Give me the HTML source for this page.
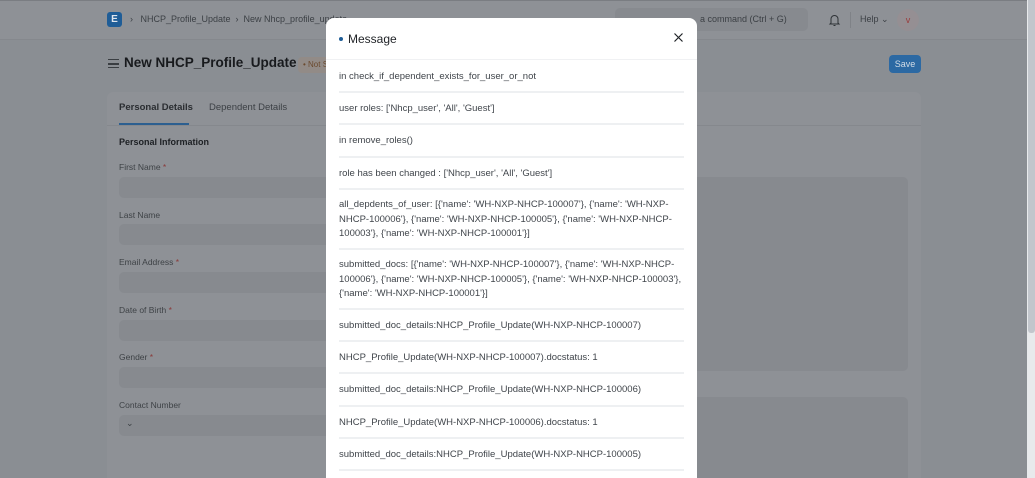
<!DOCTYPE html>
<html style="overflow:hidden;width:1035px;height:478px"><head><meta charset="utf-8"><style>
*{box-sizing:border-box;margin:0;padding:0}
body{width:1035px;height:478px;overflow:hidden;background:#8a8e93;font-family:"Liberation Sans",sans-serif;position:relative}
.a{position:absolute}
.nav{left:0;top:0;width:1027px;height:40px;background:#8e9196;border-top:1px solid #7a7d82;border-bottom:1px solid #85888d}
.lbl{font-size:8.5px;color:#3e4246}
.lbl b{color:#8a3a3a;font-weight:normal}
.inp{background:#878a8f;border-radius:5px;height:21px}
.modal{left:326px;top:18px;width:371px;height:460px;background:#fff;border-radius:8px 8px 0 0}
.row{left:339px;width:345px;border-bottom:2px solid #eef0f2;font-size:9.5px;color:#40454b;line-height:14.5px;white-space:nowrap}
</style></head><body>
<div class="a nav"></div>
<div class="a" style="left:107px;top:12px;width:15px;height:15px;background:#1f5d97;border-radius:3px;color:#dfe6ee;font-size:10px;font-weight:bold;text-align:center;line-height:15px">E</div>
<div class="a" style="left:130px;top:14px;font-size:9px;color:#3c4045;white-space:nowrap">›&nbsp;&nbsp; NHCP_Profile_Update &nbsp;›&nbsp; New Nhcp_profile_update</div>
<div class="a" style="left:615px;top:8px;width:193px;height:23px;background:#878a8f;border-radius:5px"></div>
<div class="a" style="left:700px;top:14px;font-size:9px;color:#3c4045">a command (Ctrl + G)</div>
<svg class="a" style="left:828px;top:13px" width="13" height="14" viewBox="0 0 13 14"><path d="M3 10V6a3.5 3.5 0 0 1 7 0v4l1 1H2z M5.5 12.5h2" fill="none" stroke="#2f3337" stroke-width="1"/></svg>
<div class="a" style="left:850px;top:12px;width:1px;height:16px;background:#7f8287"></div>
<div class="a" style="left:860px;top:14px;font-size:9px;color:#3c4045">Help ⌄</div>
<div class="a" style="left:897px;top:9px;width:22px;height:22px;border-radius:50%;background:#958f93;color:#9a3b3b;font-size:9px;text-align:center;line-height:22px">v</div>

<div class="a" style="left:108px;top:59px;width:11px;height:9px;border-top:1.5px solid #3a3e42;border-bottom:1.5px solid #3a3e42"></div>
<div class="a" style="left:108px;top:63px;width:11px;height:1.5px;background:#3a3e42"></div>
<div class="a" style="left:124px;top:55px;font-size:13.5px;font-weight:bold;color:#181a1d;white-space:nowrap">New NHCP_Profile_Update</div>
<div class="a" style="left:298px;top:57px;width:40px;height:16px;background:#928b87;border-radius:4px;font-size:8px;color:#6b4a2e;line-height:16px;padding-left:5px">• Not S</div>
<div class="a" style="left:889px;top:55px;width:32px;height:18px;background:#2c69a3;border-radius:4px;color:#d2dce6;font-size:9px;text-align:center;line-height:18px">Save</div>

<div class="a" style="left:107px;top:92px;width:814px;height:400px;background:#8e9196;border-radius:6px"></div>
<div class="a" style="left:107px;top:125px;width:814px;height:1px;background:#85888d"></div>
<div class="a" style="left:119px;top:102px;font-size:9.5px;font-weight:bold;color:#2a2d31">Personal Details</div>
<div class="a" style="left:209px;top:102px;font-size:9.5px;color:#3c4045">Dependent Details</div>
<div class="a" style="left:119px;top:123px;width:70px;height:2px;background:#2c5f90"></div>
<div class="a" style="left:119px;top:137px;font-size:9px;font-weight:bold;color:#1d2024">Personal Information</div>
<div class="a lbl" style="left:119px;top:162px">First Name <b>*</b></div>
<div class="a inp" style="left:119px;top:177px;width:230px"></div>
<div class="a lbl" style="left:119px;top:210px">Last Name</div>
<div class="a inp" style="left:119px;top:224px;width:230px"></div>
<div class="a lbl" style="left:119px;top:257px">Email Address <b>*</b></div>
<div class="a inp" style="left:119px;top:272px;width:230px"></div>
<div class="a lbl" style="left:119px;top:305px">Date of Birth <b>*</b></div>
<div class="a inp" style="left:119px;top:320px;width:230px"></div>
<div class="a lbl" style="left:119px;top:352px">Gender <b>*</b></div>
<div class="a inp" style="left:119px;top:367px;width:230px"></div>
<div class="a lbl" style="left:119px;top:400px">Contact Number</div>
<div class="a inp" style="left:119px;top:415px;width:230px;font-size:9px;color:#3c4045;padding:3px 0 0 7px">⌄</div>
<div class="a" style="left:660px;top:177px;width:248px;height:194px;background:#878a8f;border-radius:5px"></div>
<div class="a" style="left:660px;top:397px;width:248px;height:90px;background:#878a8f;border-radius:5px"></div>

<div class="a" style="left:1027px;top:0;width:8px;height:478px;background:#e8eaec"></div>
<div class="a" style="left:1028px;top:0;width:7px;height:333px;background:#c2c6cc;border-radius:0 0 3px 3px"></div>

<div class="a modal"></div>
<div class="a" style="left:326px;top:59px;width:371px;height:1px;background:#f0f1f3"></div>
<div class="a" style="left:339px;top:37px;width:4px;height:4px;border-radius:50%;background:#1f5d97"></div>
<div class="a" style="left:348px;top:32px;font-size:12px;color:#1f2226">Message</div>
<svg class="a" style="left:673px;top:32px" width="11" height="11" viewBox="0 0 11 11"><path d="M1.5 1.5l8 8M9.5 1.5l-8 8" stroke="#1f2226" stroke-width="1.2"/></svg>

<div class="a row" style="top:60px;height:33px;padding-top:10px">in check_if_dependent_exists_for_user_or_not</div>
<div class="a row" style="top:93px;height:32px;padding-top:9px">user roles: ['Nhcp_user', 'All', 'Guest']</div>
<div class="a row" style="top:125px;height:33px;padding-top:9px">in remove_roles()</div>
<div class="a row" style="top:158px;height:32px;padding-top:9px">role has been changed : ['Nhcp_user', 'All', 'Guest']</div>
<div class="a row" style="top:190px;height:60px;padding-top:8px">all_depdents_of_user: [{'name': 'WH-NXP-NHCP-100007'}, {'name': 'WH-NXP-<br>NHCP-100006'}, {'name': 'WH-NXP-NHCP-100005'}, {'name': 'WH-NXP-NHCP-<br>100003'}, {'name': 'WH-NXP-NHCP-100001'}]</div>
<div class="a row" style="top:250px;height:60px;padding-top:8px">submitted_docs: [{'name': 'WH-NXP-NHCP-100007'}, {'name': 'WH-NXP-NHCP-<br>100006'}, {'name': 'WH-NXP-NHCP-100005'}, {'name': 'WH-NXP-NHCP-100003'},<br>{'name': 'WH-NXP-NHCP-100001'}]</div>
<div class="a row" style="top:310px;height:32px;padding-top:9px">submitted_doc_details:NHCP_Profile_Update(WH-NXP-NHCP-100007)</div>
<div class="a row" style="top:342px;height:32px;padding-top:9px">NHCP_Profile_Update(WH-NXP-NHCP-100007).docstatus: 1</div>
<div class="a row" style="top:374px;height:33px;padding-top:9px">submitted_doc_details:NHCP_Profile_Update(WH-NXP-NHCP-100006)</div>
<div class="a row" style="top:407px;height:32px;padding-top:9px">NHCP_Profile_Update(WH-NXP-NHCP-100006).docstatus: 1</div>
<div class="a row" style="top:439px;height:32px;padding-top:9px">submitted_doc_details:NHCP_Profile_Update(WH-NXP-NHCP-100005)</div>
</body></html>
